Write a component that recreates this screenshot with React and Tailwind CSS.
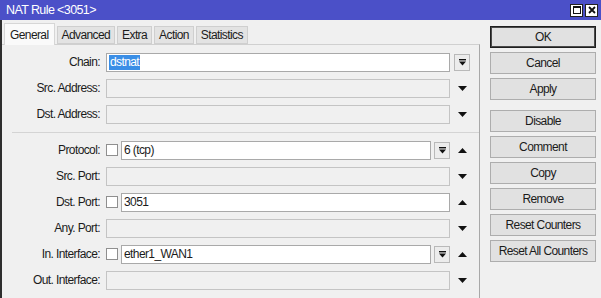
import React from 'react';

const FONT = "font-['Liberation_Sans',Arial,sans-serif] text-[12px] tracking-[-0.6px] text-[#1b1b1b]";

const TABS = ['General', 'Advanced', 'Extra', 'Action', 'Statistics'];

const BUTTONS = [
  { label: 'OK', primary: true },
  { label: 'Cancel' },
  { label: 'Apply' },
  { label: 'Disable', gap: true },
  { label: 'Comment' },
  { label: 'Copy' },
  { label: 'Remove' },
  { label: 'Reset Counters' },
  { label: 'Reset All Counters' },
];

function DropIcon() {
  return (
    <svg width="7" height="7" viewBox="0 0 7 7">
      <rect x="0" y="0" width="7" height="1.4" fill="#111" />
      <polygon points="0,2.6 7,2.6 3.5,6.6" fill="#111" />
    </svg>
  );
}

function DropButton() {
  return (
    <div className="w-[16px] h-[17px] flex items-center justify-center border border-[#b9b9b9] bg-[#ececec]">
      <DropIcon />
    </div>
  );
}

function Tri({ up }) {
  return (
    <svg width="9" height="5" viewBox="0 0 9 5">
      {up
        ? <polygon points="0,5 9,5 4.5,0" fill="#111" />
        : <polygon points="0,0 9,0 4.5,5" fill="#111" />}
    </svg>
  );
}

function Checkbox() {
  return <div className="w-[12px] h-[12px] shrink-0 border border-[#8f8f8f] bg-white" />;
}

function Row({ label, value, enabled, check, drop, side }) {
  // side: 'drop' | 'up' | 'down'
  return (
    <div className="h-[26px] flex items-center">
      <div className="w-[98px] text-right whitespace-nowrap">{label}</div>
      <div className="ml-[6px] w-[344px] flex items-center">
        {check && <Checkbox />}
        <div
          className={`flex-1 h-[19px] flex items-center px-[2px] border
            ${check ? 'ml-[3px]' : ''}
            ${enabled ? 'bg-white border-[#a9a9a9]' : 'bg-[#f0f0f0] border-[#c4c4c4]'}`}
        >
          {value === 'dstnat' ? (
            <span className="bg-[#3a8ee6] text-white px-[1px] leading-[15px]">dstnat</span>
          ) : (
            <span>{value}</span>
          )}
        </div>
        {drop && (
          <div className="ml-[3px]">
            <DropButton />
          </div>
        )}
      </div>
      <div className="w-[24px] flex justify-center">
        {side === 'drop' && <DropButton />}
        {side === 'up' && <Tri up />}
        {side === 'down' && <Tri />}
      </div>
    </div>
  );
}

export default function App() {
  return (
    <div className={`w-[601px] h-[298px] overflow-hidden bg-[#f0f0f0] flex flex-col ${FONT}`}>
      {/* title bar */}
      <div className="h-[20px] shrink-0 bg-[#4b50c8] flex items-center justify-between pl-[6px] pr-[3px]">
        <span className="text-white text-[12.5px]">NAT Rule &lt;3051&gt;</span>
        <div className="flex items-center gap-[2px]">
          <div className="w-[13px] h-[13px] bg-white border border-[#222] flex items-center justify-center">
            <div className="w-[8px] h-[8px] border border-[#111] border-t-2" />
          </div>
          <div className="w-[13px] h-[13px] bg-white border border-[#222] flex items-center justify-center">
            <svg width="8" height="8" viewBox="0 0 8 8">
              <path d="M1 1 L7 7 M7 1 L1 7" stroke="#111" strokeWidth="1.8" />
            </svg>
          </div>
        </div>
      </div>

      <div className="flex-1 flex border-l-2 border-[#2e2e2e]">
        {/* left: tabs + panel */}
        <div className="w-[478px] flex flex-col">
          <div className="h-[24px] flex items-end pl-[2px] gap-[2px] shrink-0">
            {TABS.map((t, i) =>
              i === 0 ? (
                <div
                  key={t}
                  className="h-[22px] px-[5px] flex items-center bg-[#fafafa] border border-b-0 border-[#d6d6d6] -mb-px relative z-10"
                >
                  {t}
                </div>
              ) : (
                <div
                  key={t}
                  className="h-[18px] px-[4px] flex items-center bg-[#e3e3e3] border border-[#cfcfcf]"
                >
                  {t}
                </div>
              )
            )}
          </div>
          <div className="flex-1 border-t border-r border-[#d0d0d0] border-r-[#a8a8a8] pt-[4px]">
            <Row label="Chain:" value="dstnat" enabled side="drop" />
            <Row label="Src. Address:" side="down" />
            <Row label="Dst. Address:" side="down" />
            <div className="h-[10px] flex items-center pl-[10px]">
              <div className="flex-1 border-t border-[#d4d4d4]" />
            </div>
            <Row label="Protocol:" value="6 (tcp)" enabled check drop side="up" />
            <Row label="Src. Port:" side="down" />
            <Row label="Dst. Port:" value="3051" enabled check side="up" />
            <Row label="Any. Port:" side="down" />
            <Row label="In. Interface:" value="ether1_WAN1" enabled check drop side="up" />
            <Row label="Out. Interface:" side="down" />
          </div>
        </div>

        {/* right: buttons */}
        <div className="ml-[10px] w-[106px] pt-[6px] flex flex-col">
          {BUTTONS.map((b, i) => (
            <div
              key={b.label}
              className={`h-[22px] flex items-center justify-center bg-[#e1e1e1] border whitespace-nowrap
                ${i > 0 ? (b.gap ? 'mt-[10px]' : 'mt-[4px]') : ''}
                ${b.primary ? 'border-[#1f1f1f] shadow-[inset_0_0_0_1px_#4a4a4a]' : 'border-[#adadad]'}`}
            >
              {b.label}
            </div>
          ))}
        </div>
      </div>
    </div>
  );
}
